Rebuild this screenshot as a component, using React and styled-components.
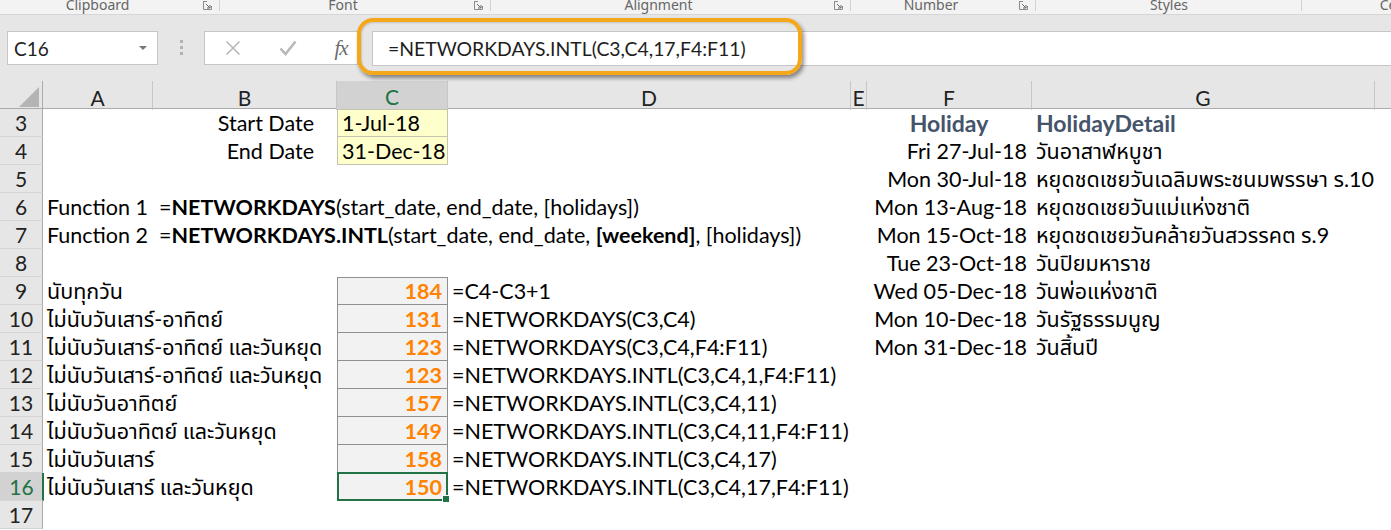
import React from 'react';
import styled, { createGlobalStyle, css } from 'styled-components';

const FONT = `"Lato", "Noto Sans Thai", "Noto Sans Thai UI", "Noto Sans", "DejaVu Sans", sans-serif`;
const GREEN = '#217346';

const GlobalStyle = createGlobalStyle`
  html, body { margin: 0; padding: 0; background: #fff; overflow: hidden; }
  body { font-family: ${FONT}; }
  * { box-sizing: border-box; }
`;

const Page = styled.div`
  width: 1391px;
  height: 530px;
  overflow: hidden;
  display: flex;
  flex-direction: column;
  background: #fff;
`;

/* ---------- Ribbon group labels ---------- */
const RibbonStrip = styled.div`
  flex: none;
  height: 15px;
  display: flex;
  background: #f3f3f3;
  border-bottom: 1px solid #d6d6d6;
  overflow: hidden;
`;
const Group = styled.div`
  flex: none;
  width: ${p => p.$w}px;
  display: flex;
  position: relative;
  &::after {
    content: '';
    position: absolute;
    right: 0;
    top: 0;
    width: 1px;
    height: 11px;
    background: ${p => (p.$noDivider ? 'transparent' : '#d3d3d3')};
  }
`;
const GroupLabel = styled.div`
  flex: 1;
  text-align: center;
  font-family: "Noto Sans", sans-serif;
  font-size: 14px;
  line-height: 14px;
  margin-top: -2px;
  color: #666;
  white-space: nowrap;
`;
const Launcher = styled.div`
  flex: none;
  width: 25px;
  display: flex;
  justify-content: center;
  padding-top: 1px;
`;

const LauncherIcon = () => (
  <svg width="9" height="9" viewBox="0 0 9 9">
    <path d="M0.5 0 V0.5 H4" fill="none" stroke="#8a8a8a" />
    <path d="M0.5 0.5 V8.5 H8.5 V5" fill="none" stroke="#8a8a8a" />
    <path d="M3 3 L7 7 M7 4 V7 H4" fill="none" stroke="#6a6a6a" />
  </svg>
);

/* ---------- Formula bar ---------- */
const FormulaArea = styled.div`
  flex: none;
  height: 66px;
  position: relative;
  background: #e6e6e6;
  padding-top: 16px;
`;
const FormulaRow = styled.div`
  display: flex;
  height: 35px;
`;
const NameBox = styled.div`
  flex: none;
  margin-left: 7px;
  width: 151px;
  height: 34px;
  background: #fff;
  border: 1px solid #c6c6c6;
  display: flex;
  align-items: center;
  justify-content: space-between;
  padding: 0 10px 0 6px;
  font-family: ${FONT};
  font-size: 19px;
  color: #222;
`;
const Caret = styled.span`
  width: 0;
  height: 0;
  border-left: 4px solid transparent;
  border-right: 4px solid transparent;
  border-top: 4px solid #777;
`;
const Grip = styled.div`
  flex: none;
  width: 46px;
  display: flex;
  flex-direction: column;
  align-items: center;
  justify-content: center;
  gap: 3px;
  padding-bottom: 2px;
`;
const GripDot = styled.span`
  width: 3px;
  height: 3px;
  background: #b3b3b3;
`;
const FxBox = styled.div`
  flex: none;
  width: 154px;
  height: 34px;
  background: #fff;
  border: 1px solid #c6c6c6;
  display: flex;
  align-items: center;
  padding-left: 19px;
`;
const FxSlot = styled.div`
  flex: none;
  width: ${p => p.$w}px;
  display: flex;
  justify-content: center;
  align-items: center;
`;
const FxText = styled.span`
  font-family: "Liberation Serif", serif;
  font-style: italic;
  font-size: 21px;
  color: #6b6b6b;
  letter-spacing: -1px;
`;
const FormulaInput = styled.div`
  flex: 1;
  margin-left: 14px;
  background: #fff;
  border-top: 1px solid #c6c6c6;
  border-bottom: 1px solid #c6c6c6;
  border-left: 1px solid #c6c6c6;
  display: flex;
  align-items: center;
  padding-left: 15px;
  font-family: ${FONT};
  font-size: 19.4px;
  color: #1e1e1e;
  white-space: nowrap;
`;
const Highlight = styled.div`
  position: absolute;
  left: 357px;
  top: 3px;
  width: 445px;
  height: 57px;
  border: 4px solid #f5a71a;
  border-radius: 16px;
  box-shadow: 2px 3px 4px rgba(0, 0, 0, 0.45), inset 1px 1px 2px rgba(0,0,0,0.15);
  pointer-events: none;
`;

/* ---------- Sheet ---------- */
const COLS = ['A', 'B', 'C', 'D', 'E', 'F', 'G', 'H'];
const TEMPLATE = '43px 110px 184px 111px 403px 16px 165px 343px 100px';
const CELL_FONT = 21.5;

const HeaderRow = styled.div`
  flex: none;
  display: grid;
  grid-template-columns: ${TEMPLATE};
  height: 28px;
  background: #e6e6e6;
  border-bottom: 1px solid #ababab;
`;
const Corner = styled.div`
  border-right: 1px solid #ababab;
  display: flex;
  align-items: flex-end;
  justify-content: flex-end;
  padding: 0 3px 3px 0;
`;
const ColHead = styled.div`
  display: flex;
  align-items: center;
  justify-content: center;
  border-right: 1px solid #c6c6c6;
  font-size: 21px;
  color: #222;
  padding-top: 3px;
  ${p =>
    p.$active &&
    css`
      background: #d2d2d2;
      color: ${GREEN};
      border-bottom: 2px solid ${GREEN};
      margin-bottom: -1px;
    `}
`;

const Body = styled.div`
  flex: 1;
  display: flex;
  flex-direction: column;
`;
const Row = styled.div`
  flex: none;
  display: grid;
  grid-template-columns: ${TEMPLATE};
  height: 28px;
`;
const RowHead = styled.div`
  background: ${p => (p.$active ? '#d2d2d2' : '#e6e6e6')};
  color: ${p => (p.$active ? GREEN : '#222')};
  border-right: ${p => (p.$active ? `2px solid ${GREEN}` : '1px solid #ababab')};
  margin-right: ${p => (p.$active ? '-1px' : '0')};
  border-bottom: 1px solid #d4d4d4;
  font-size: 21px;
  display: flex;
  align-items: center;
  justify-content: center;
  padding-left: ${p => (p.$active ? '1px' : '0')};
  position: relative;
  z-index: 1;
`;

const fills = {
  yellow: css`
    background: #ffffcc;
    border: 1px solid #c3c3b0;
  `,
  grey: css`
    background: #f2f2f2;
    border: 1px solid #8f8f8f;
  `,
};

const Cell = styled.div`
  position: relative;
  height: 28px;
  display: flex;
  align-items: center;
  justify-content: ${p => (p.$align === 'right' ? 'flex-end' : p.$align === 'center' ? 'center' : 'flex-start')};
  padding-left: ${p => p.$pl ?? 4}px;
  padding-right: ${p => p.$pr ?? 5}px;
  white-space: pre;
  overflow: visible;
  font-size: ${p => p.$size || CELL_FONT}px;
  line-height: 26px;
  color: ${p => p.$color || '#000'};
  font-weight: ${p => (p.$bold ? 700 : 400)};
  ${p => p.$fill && fills[p.$fill]}
  ${p => p.$fill && !p.$first && css`border-top: none;`}
  ${p => p.$fill && css`padding-top: ${p.$first ? 0 : 1}px;`}
`;
const Selection = styled.span`
  position: absolute;
  left: -1px;
  top: -1px;
  right: -1px;
  bottom: -1px;
  border: 2px solid ${GREEN};
  pointer-events: none;
`;
const FillHandle = styled.span`
  position: absolute;
  right: -4px;
  bottom: -4px;
  width: 6px;
  height: 6px;
  background: ${GREEN};
  border: 1px solid #fff;
  box-sizing: content-box;
`;
const B = styled.b`
  font-weight: 700;
`;
const Plain = styled.span``;

const ORANGE = '#ff8200';
const SLATE = '#44546a';

const rows = [
  { n: 3, B: { t: 'Start Date', align: 'right', pr: 23 }, C: { t: '1-Jul-18', fill: 'yellow', first: true }, F: { t: 'Holiday', align: 'center', bold: true, color: SLATE, size: 23 }, G: { t: 'HolidayDetail', bold: true, color: SLATE, size: 23 } },
  { n: 4, B: { t: 'End Date', align: 'right', pr: 23 }, C: { t: '31-Dec-18', fill: 'yellow' }, F: { t: 'Fri 27-Jul-18', align: 'right' }, G: { t: 'วันอาสาฬหบูชา' } },
  { n: 5, F: { t: 'Mon 30-Jul-18', align: 'right' }, G: { t: 'หยุดชดเชยวันเฉลิมพระชนมพรรษา ร.10' } },
  {
    n: 6,
    A: { t: <Plain>{'Function 1  ='}<B>NETWORKDAYS</B>{'(start_date, end_date, [holidays])'}</Plain> },
    F: { t: 'Mon 13-Aug-18', align: 'right' },
    G: { t: 'หยุดชดเชยวันแม่แห่งชาติ' },
  },
  {
    n: 7,
    A: { t: <Plain>{'Function 2  ='}<B>NETWORKDAYS.INTL</B>{'(start_date, end_date, '}<B>[weekend]</B>{', [holidays])'}</Plain> },
    F: { t: 'Mon 15-Oct-18', align: 'right' },
    G: { t: 'หยุดชดเชยวันคล้ายวันสวรรคต ร.9' },
  },
  { n: 8, F: { t: 'Tue 23-Oct-18', align: 'right' }, G: { t: 'วันปิยมหาราช' } },
  { n: 9, A: { t: 'นับทุกวัน' }, C: { t: '184', fill: 'grey', first: true }, D: { t: '=C4-C3+1' }, F: { t: 'Wed 05-Dec-18', align: 'right' }, G: { t: 'วันพ่อแห่งชาติ' } },
  { n: 10, A: { t: 'ไม่นับวันเสาร์-อาทิตย์' }, C: { t: '131', fill: 'grey' }, D: { t: '=NETWORKDAYS(C3,C4)' }, F: { t: 'Mon 10-Dec-18', align: 'right' }, G: { t: 'วันรัฐธรรมนูญ' } },
  { n: 11, A: { t: 'ไม่นับวันเสาร์-อาทิตย์ และวันหยุด' }, C: { t: '123', fill: 'grey' }, D: { t: '=NETWORKDAYS(C3,C4,F4:F11)' }, F: { t: 'Mon 31-Dec-18', align: 'right' }, G: { t: 'วันสิ้นปี' } },
  { n: 12, A: { t: 'ไม่นับวันเสาร์-อาทิตย์ และวันหยุด' }, C: { t: '123', fill: 'grey' }, D: { t: '=NETWORKDAYS.INTL(C3,C4,1,F4:F11)' } },
  { n: 13, A: { t: 'ไม่นับวันอาทิตย์' }, C: { t: '157', fill: 'grey' }, D: { t: '=NETWORKDAYS.INTL(C3,C4,11)' } },
  { n: 14, A: { t: 'ไม่นับวันอาทิตย์ และวันหยุด' }, C: { t: '149', fill: 'grey' }, D: { t: '=NETWORKDAYS.INTL(C3,C4,11,F4:F11)' } },
  { n: 15, A: { t: 'ไม่นับวันเสาร์' }, C: { t: '158', fill: 'grey' }, D: { t: '=NETWORKDAYS.INTL(C3,C4,17)' } },
  { n: 16, active: true, A: { t: 'ไม่นับวันเสาร์ และวันหยุด' }, C: { t: '150', fill: 'grey', selected: true }, D: { t: '=NETWORKDAYS.INTL(C3,C4,17,F4:F11)' } },
  { n: 17 },
];

const groups = [
  { label: 'Clipboard', w: 220, launcher: true },
  { label: 'Font', w: 271, launcher: true },
  { label: 'Alignment', w: 360, launcher: true },
  { label: 'Number', w: 185, launcher: true },
  { label: 'Styles', w: 266 },
  { label: 'Cells', w: 186, noDivider: true },
];

export default function App() {
  return (
    <Page>
      <GlobalStyle />
      <RibbonStrip>
        {groups.map(g => (
          <Group key={g.label} $w={g.w} $noDivider={g.noDivider}>
            <GroupLabel>{g.label}</GroupLabel>
            {g.launcher && (
              <Launcher>
                <LauncherIcon />
              </Launcher>
            )}
          </Group>
        ))}
      </RibbonStrip>

      <FormulaArea>
        <FormulaRow>
          <NameBox>
            <span>C16</span>
            <Caret />
          </NameBox>
          <Grip>
            <GripDot />
            <GripDot />
            <GripDot />
          </Grip>
          <FxBox>
            <FxSlot $w={18}>
              <svg width="16" height="16" viewBox="0 0 16 16">
                <path d="M1.5 1.5 L14.5 14.5 M14.5 1.5 L1.5 14.5" stroke="#b8b8b8" strokeWidth="1.6" fill="none" />
              </svg>
            </FxSlot>
            <FxSlot $w={92}>
              <svg width="18" height="16" viewBox="0 0 18 16">
                <path d="M1.5 8.5 L6.5 14 L16.5 1.5" stroke="#b8b8b8" strokeWidth="2.6" fill="none" strokeLinejoin="miter" />
              </svg>
            </FxSlot>
            <FxSlot $w={14}>
              <FxText>fx</FxText>
            </FxSlot>
          </FxBox>
          <FormulaInput>=NETWORKDAYS.INTL(C3,C4,17,F4:F11)</FormulaInput>
        </FormulaRow>
        <Highlight />
      </FormulaArea>

      <HeaderRow>
        <Corner>
          <svg width="20" height="20" viewBox="0 0 20 20">
            <polygon points="0,20 20,20 20,0" fill="#b4b4b4" />
          </svg>
        </Corner>
        {COLS.map(c => (
          <ColHead key={c} $active={c === 'C'}>
            {c}
          </ColHead>
        ))}
      </HeaderRow>

      <Body>
        {rows.map(r => (
          <Row key={r.n}>
            <RowHead $active={r.active}>{r.n}</RowHead>
            {COLS.map(c => {
              const d = r[c];
              if (!d) return <Cell key={c} />;
              return (
                <Cell
                  key={c}
                  $align={d.align || (d.fill === 'grey' ? 'right' : 'left')}
                  $fill={d.fill}
                  $first={d.first}
                  $bold={d.bold || d.fill === 'grey'}
                  $color={d.color || (d.fill === 'grey' ? ORANGE : undefined)}
                  $pr={d.pr}
                  $size={d.size}
                >
                  {d.t}
                  {d.selected && (
                    <Selection>
                      <FillHandle />
                    </Selection>
                  )}
                </Cell>
              );
            })}
          </Row>
        ))}
      </Body>
    </Page>
  );
}
